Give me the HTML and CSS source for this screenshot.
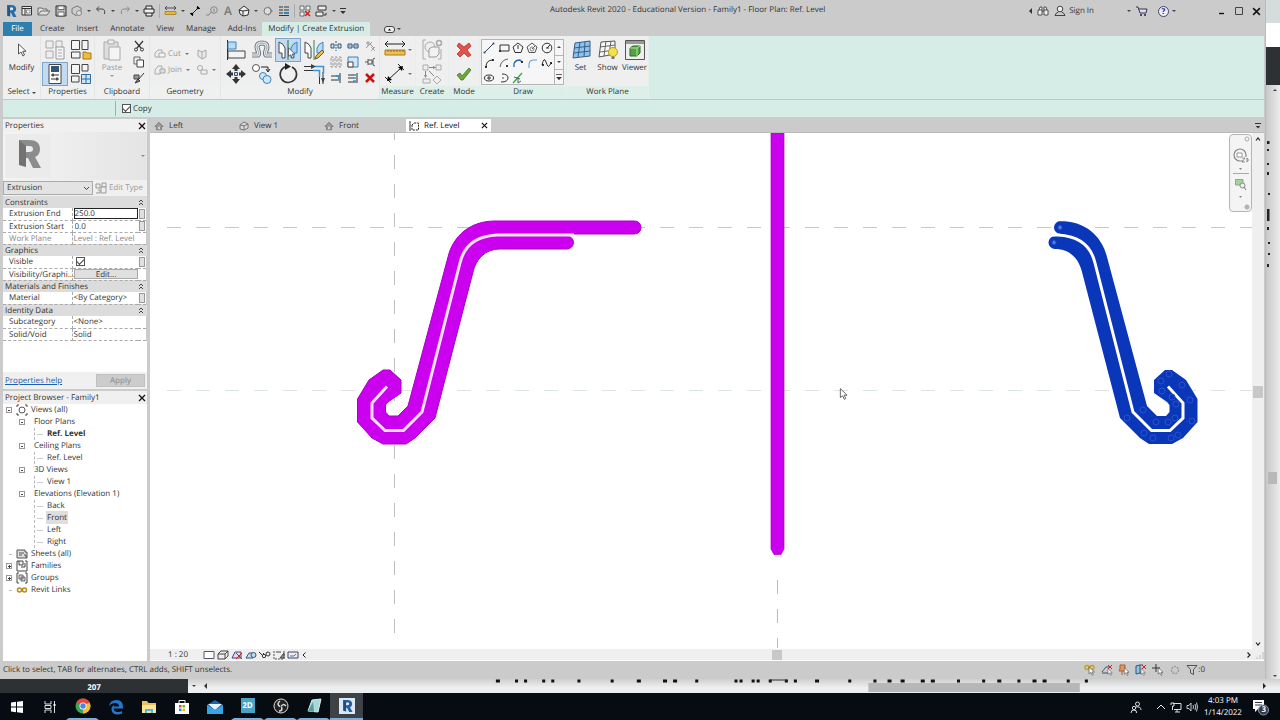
FILE: index.html
```html
<!doctype html>
<html lang="en-us">

<head>
    <title>Autodesk Revit 2020 - Family1</title>
    <meta charset="utf-8" />
    <meta name="viewport" content="width=device-width, initial-scale=1.0" />
    <link rel="stylesheet" href="styles.css">
</head>

<body>
    <!-- shared icons -->
    <svg class="defs" aria-hidden="true">
        <symbol id="house" viewBox="0 0 12 12"><path d="M1 6.500 6 1.500 11 6.500H9V10.500H3V6.500Z" fill="#999" stroke="#777"/><path d="M5 7h2v3H5z" fill="#ddd"/></symbol>
        <symbol id="cursor" viewBox="0 0 10 14"><path d="M1.500 1V11L4 9 6 13 7.500 12 5.700 8.300H9Z" fill="#fff" stroke="#444" stroke-width=".9"/></symbol>
        <symbol id="rlogo" viewBox="0 0 28 32"><path d="M5 2H15C22 2 26 5 26 11 26 15 24 18 21 19L27 30H19L14 20H12V29L5 27Z" fill="currentColor"/><path d="M12 8H15C18 8 19 9 19 11S18 14 15 14H12Z" fill="#e9eef2"/><path d="M5 2 12 8V29L5 27Z" fill="#000" opacity=".18"/></symbol>
        <symbol id="cross" viewBox="0 0 8 8"><path d="M1 1 7 7M7 1 1 7" stroke="currentColor" stroke-width="1.300"/></symbol>
        <symbol id="up2" viewBox="0 0 6 7"><path d="M1 3 3 1 5 3M1 6 3 4 5 6" fill="none" stroke="#333" stroke-width=".9"/></symbol>
    </svg>

    <div class="desktop">
        <div class="upper">
            <div class="window">
                <header class="titlebar">
                    <div class="quick">
                        <button class="q-r" aria-label="Revit"><svg width="12" height="14" viewBox="0 0 28 32"><use href="#rlogo"/></svg></button>
                        <button aria-label="Home"><svg width="12" height="12"><path d="M1 1.500H10.500V10H1ZM1 3.500H10M4 3V10" fill="#eee" stroke="#333"/><path d="M5.500 5H9V8H5.500Z" fill="#fff" stroke="#666" stroke-width=".7"/></svg></button>
                        <button aria-label="Open"><svg width="14" height="12"><path d="M1 10V3H5L6 4H10V6M1 10 4 6H13L10 10Z" fill="#ddd" stroke="#555" stroke-width=".8"/></svg></button>
                        <button aria-label="Save"><svg width="12" height="12"><path d="M1 1H11V11H1Z" fill="#bbb" stroke="#333"/><path d="M3 1H9V4.500H3ZM3 7H9V11H3Z" fill="#f5f5f5" stroke="#444" stroke-width=".7"/></svg></button>
                        <button aria-label="Synchronize"><svg width="12" height="12"><path d="M1 3.500 6 1 10 3V8L5 10.500 1 8Z" fill="#ccc" stroke="#777"/><circle cx="8" cy="8" r="2.500" fill="#ddd" stroke="#888"/></svg><i class="caret"></i></button>
                        <button aria-label="Undo"><svg width="12" height="12"><path d="M4 1.500 1.500 4 4 6.500M2 4H7Q10.500 4 9.500 9" fill="none" stroke="#444"/></svg><i class="caret"></i></button>
                        <button aria-label="Redo"><svg width="12" height="12"><path d="M8 1.500 10.500 4 8 6.500M10 4H5Q1.500 4 2.500 9" fill="none" stroke="#888"/></svg><i class="caret"></i></button>
                        <button aria-label="Print"><svg width="12" height="12"><path d="M3 4V1H9V4M1 4H11V8H1ZM3 8V11H9V8" fill="#eee" stroke="#222"/></svg></button>
                        <span class="sep"></span>
                        <button aria-label="Measure"><svg width="13" height="12"><path d="M1 3H12M3 1 1 3 3 5M10 1 12 3 10 5" fill="none" stroke="#333" stroke-width=".8"/><path d="M1 6.500H12V9.500H1Z" fill="#e9b63c" stroke="#9c7514" stroke-width=".7"/></svg><i class="caret"></i></button>
                        <button aria-label="Aligned Dimension"><svg width="12" height="12"><path d="M2 10 10 2M1 8 4 11M8 1 11 4" stroke="#222"/><circle cx="3" cy="9" r="1.300"/><circle cx="9" cy="3" r="1.300"/></svg></button>
                        <button aria-label="Tag"><svg width="13" height="12"><path d="M1 10H4L6 7" fill="none" stroke="#888"/><circle cx="9" cy="5" r="3.300" fill="none" stroke="#888"/><path d="M9 3.500V7" stroke="#888"/></svg></button>
                        <button class="q-a" aria-label="Text">A</button>
                        <button aria-label="Default 3D View"><svg width="12" height="12"><path d="M1 5 6 1 11 5 10 10 5 11 2 9Z" fill="#eee" stroke="#333"/><path d="M5 6V11M1 5 5 6 11 5" stroke="#333" fill="none"/></svg><i class="caret"></i></button>
                        <button aria-label="Section"><svg width="12" height="12"><path d="M6 1 11 6 6 11" fill="#888"/><circle cx="5.500" cy="6" r="3.500" fill="#ddd" stroke="#777"/></svg></button>
                        <button aria-label="Thin Lines"><svg width="12" height="12"><path d="M1 2H5M1 5H5M1 8H5M1 10.500H11M6 2H11M6 5H11" stroke="#333"/><path d="M6 8H11" stroke="#28c" stroke-width="2"/></svg></button>
                        <span class="sep"></span>
                        <button aria-label="Close Hidden Windows"><svg width="12" height="12"><path d="M1 1H5V5H1ZM7 1H11V5H7ZM1 7H5V11H1Z" fill="#eee" stroke="#555" stroke-width=".8"/><path d="M6 6 11 11M11 6 6 11" stroke="#c22" stroke-width="1.500"/></svg></button>
                        <button aria-label="Switch Windows"><svg width="13" height="12"><path d="M3 1H11V5H3ZM1 7H8V11H1Z" fill="#eee" stroke="#333"/><path d="M11 8V10H9" fill="none" stroke="#333"/></svg><i class="caret"></i></button>
                        <button aria-label="Customize"><i class="caret caret-bar"></i></button>
                    </div>
                    <h1>Autodesk Revit 2020 - Educational Version - Family1 - Floor Plan: Ref. Level</h1>
                    <div class="account">
                        <i class="caret caret-left"></i>
                        <button aria-label="Search"><svg width="12" height="12"><path d="M2 5 3 2H5V5M7 5V2H9L10 5M1 5H5V10H1ZM7 5H11V10H7ZM5 6H7" fill="#eee" stroke="#444" stroke-width=".9"/></svg></button>
                        <button class="signin"><svg width="12" height="12"><circle cx="6" cy="4" r="2.800" fill="#eee" stroke="#444"/><path d="M1 10.500Q1.500 8 4.500 7M11 10.500Q10.500 8 7.500 7M1 10.500H11" fill="none" stroke="#444"/></svg>Sign In</button>
                        <i class="caret caret-far"></i>
                        <button aria-label="App Store"><svg width="12" height="12"><path d="M0 2H2L4 8H10L11 4H3" fill="#dde" stroke="#335"/><circle cx="5" cy="10" r="1" fill="#224"/><circle cx="9" cy="10" r="1" fill="#224"/></svg></button>
                        <button class="helpbtn" aria-label="Help"><span class="help">?</span><i class="caret"></i></button>
                    </div>
                    <div class="winbtns">
                        <button aria-label="Minimize"><svg width="8" height="8"><path d="M1 6.500H6" stroke="#111" stroke-width="1.400"/></svg></button>
                        <button aria-label="Maximize"><svg width="10" height="8"><path d="M1.500.5H8.500V7.500H1.500Z" fill="none" stroke="#444"/></svg></button>
                        <button aria-label="Close"><svg width="9" height="9" viewBox="0 0 8 8"><use href="#cross"/></svg></button>
                    </div>
                </header>

                <nav class="tabs">
                    <a class="file" href="#">File</a>
                    <a href="#">Create</a>
                    <a href="#">Insert</a>
                    <a href="#">Annotate</a>
                    <a href="#">View</a>
                    <a href="#">Manage</a>
                    <a href="#">Add-Ins</a>
                    <a class="on" href="#">Modify | Create Extrusion</a>
                    <button aria-label="Minimize Ribbon"><svg width="11" height="7"><rect x=".5" y=".5" width="10" height="6" rx="2.500" fill="#eee" stroke="#444"/><path d="M4 4.500H7L5.500 2.500Z"/></svg><i class="caret"></i></button>
                </nav>

                <div class="ribbon">
                    <section class="panel p-select">
                        <div class="body">
                            <button class="big"><svg width="22" height="24" viewBox="0 0 22 24"><use href="#cursor" x="6" y="5" width="10" height="14"/></svg>Modify</button>
                        </div>
                        <h2>Select <i class="caret"></i></h2>
                    </section>
                    <section class="panel p-props">
                        <div class="body grid2">
                            <button aria-label="Type Properties"><svg width="22" height="22"><path d="M2 2H9V9H2ZM12 2H18V9H12ZM2 12H9V19H2Z" fill="#eee" stroke="#aaa"/><path d="M12 8H20V20H12Z" fill="#f6f6f6" stroke="#999"/><path d="M14 11H18M14 14H18M14 17H18" stroke="#aaa"/></svg></button>
                            <button aria-label="Family Category"><svg width="22" height="22"><path d="M1.500 1.500H9.500V10.500H1.500ZM12 1.500H18V10.500H12ZM1.500 13H10V19H1.500Z" fill="#f4f4f4" stroke="#444"/><path d="M13 13H16L17 14H21V20H13Z" fill="#eebb44" stroke="#a87c14"/></svg></button>
                            <button class="on" aria-label="Properties"><svg width="22" height="22"><path d="M5 1.500H17V20.500H5Z" fill="#fff" stroke="#444"/><path d="M7 3H15V9H7Z" fill="#357"/><path d="M7 12H15M7 16H15" stroke="#333"/><path d="M9 10.500V13.500M13 14.500V17.500" stroke="#333" stroke-width="1.500"/></svg></button>
                            <button aria-label="Family Types"><svg width="22" height="22"><path d="M1.500 1.500H9.500V10.500H1.500ZM12 1.500H18V8H12ZM1.500 13H9V19H1.500Z" fill="#f4f4f4" stroke="#444"/><path d="M11.500 11.500H20.500V20.500H11.500ZM11.500 16H20.500M16 11.500V20.500" fill="#cfe6f7" stroke="#2a6ca3"/></svg></button>
                        </div>
                        <h2>Properties</h2>
                    </section>
                    <section class="panel p-clip">
                        <div class="body">
                            <button class="big dim"><svg width="22" height="24"><path d="M3 4H17V21H3Z" fill="#ddd" stroke="#aaa"/><path d="M7 2H13V6H7Z" fill="#eee" stroke="#aaa"/><path d="M8 9H19V22H8Z" fill="#f4f4f4" stroke="#aaa"/></svg>Paste<i class="caret"></i></button>
                            <div class="smalls">
                                <button aria-label="Cut to Clipboard"><svg width="12" height="12"><path d="M2 1 8 8M10 1 4 8" stroke="#333" stroke-width="1.200"/><circle cx="3" cy="9.500" r="1.500" fill="none" stroke="#333"/><circle cx="9" cy="9.500" r="1.500" fill="none" stroke="#333"/></svg></button>
                                <button aria-label="Copy to Clipboard"><svg width="12" height="12"><path d="M1 1H7V8H1Z" fill="#eee" stroke="#666"/><path d="M4 4H10.500V11H4Z" fill="#fff" stroke="#444"/></svg></button>
                                <button aria-label="Match Type"><svg width="12" height="12"><path d="M1 3H6V7H1Z" fill="#999" stroke="#444"/><path d="M11 1 5 8M2 11 5 7 7 9Z" fill="#888" stroke="#333"/></svg></button>
                            </div>
                        </div>
                        <h2>Clipboard</h2>
                    </section>
                    <section class="panel p-geo">
                        <div class="body geo">
                            <button class="dim"><svg width="12" height="12"><path d="M1 5 4 2H8V6L6 9H1Z" fill="#eee" stroke="#aaa"/><path d="M5 5H11V9H5Z" fill="#f5f5f5" stroke="#aaa"/></svg>Cut<i class="caret"></i></button>
                            <button class="dim" aria-label="Cope"><svg width="12" height="12"><path d="M2 2 6 4 10 2V9L6 11 2 8ZM6 4V11" fill="#e8e8e8" stroke="#aaa"/></svg></button>
                            <button class="dim"><svg width="12" height="12"><path d="M1 6 4 2H8V6L6 10H1Z" fill="#eee" stroke="#aaa"/><path d="M6 5H11V9H6Z" fill="#ddd" stroke="#aaa"/></svg>Join<i class="caret"></i></button>
                            <button class="dim" aria-label="Wall Joins"><svg width="12" height="12"><circle cx="4" cy="4" r="2.500" fill="none" stroke="#aaa"/><path d="M5 6H11V10H5Z" fill="#eee" stroke="#aaa"/></svg><i class="caret"></i></button>
                        </div>
                        <h2>Geometry</h2>
                    </section>
                    <section class="panel p-modify">
                        <div class="body">
                            <div class="grid4">
                                <button aria-label="Align"><svg width="22" height="22"><path d="M2.500 1V21" stroke="#222"/><path d="M3 3H11V10H3Z" fill="#b9dcf5" stroke="#3a84bd"/><path d="M3 12H20V19H3Z" fill="#f4f4f4" stroke="#444"/></svg></button>
                                <button aria-label="Offset"><svg width="22" height="22"><path d="M1 16H7C9 14 6 11 6 8Q6 4 11 4T16 8C16 11 13 14 15 16H21" fill="none" stroke="#777" stroke-width="5"/><path d="M1 16H7C9 14 6 11 6 8Q6 4 11 4T16 8C16 11 13 14 15 16H21" fill="none" stroke="#eef1f4" stroke-width="3"/><path d="M1 16H7C9 14 6 11 6 8Q6 4 11 4T16 8C16 11 13 14 15 16H21" fill="none" stroke="#8aa0b4"/></svg></button>
                                <button class="on" aria-label="Mirror Pick Axis"><svg width="22" height="22"><path d="M2 3Q7 5 8 9V19H5V14H2Z" fill="#fff" stroke="#444"/><path d="M20 3Q15 5 14 9V19H17V14H20Z" fill="#9fd0f0" stroke="#3a84bd"/><path d="M11 1V21" stroke="#385" stroke-width="1.200"/><use href="#cursor" x="10" y="8" width="9" height="12"/></svg></button>
                                <button aria-label="Mirror Draw Axis"><svg width="22" height="22"><path d="M2 3Q7 5 8 9V19H5V14H2Z" fill="#fff" stroke="#444"/><path d="M20 3Q15 5 14 9V14H20Z" fill="#b9dcf5" stroke="#3a84bd"/><path d="M11 1V21" stroke="#385"/><path d="M12 20 13 17 19 11 21 13 15 19Z" fill="#eebb44" stroke="#654"/></svg></button>
                                <button aria-label="Move"><svg width="22" height="22"><path d="M11 1 15 6H12.500V8H9.500V6H7ZM11 21 7 16H9.500V14H12.500V16H15ZM1 11 6 7V9.500H8V12.500H6V15ZM21 11 16 15V12.500H14V9.500H16V7Z" fill="#333"/><path d="M9.500 9.500H12.500V12.500H9.500Z" fill="#cde" stroke="#357"/></svg></button>
                                <button aria-label="Copy"><svg width="22" height="22"><circle cx="5" cy="5" r="3.500" fill="#fff" stroke="#555"/><path d="M10 4H17V8M15 6 17 9 19 6" fill="none" stroke="#222"/><circle cx="12" cy="13" r="3.500" fill="#cfe6f7" stroke="#3a84bd"/><circle cx="16" cy="16.500" r="4" fill="#cfe6f7" stroke="#3a84bd"/></svg></button>
                                <button aria-label="Rotate"><svg width="22" height="22"><path d="M15 4A8.200 8.200 0 1 1 9 3.500" fill="none" stroke="#333" stroke-width="1.600"/><path d="M8 0 14 3.500 8 7Z" fill="#222"/></svg></button>
                                <button aria-label="Trim/Extend"><svg width="22" height="22"><path d="M1 3.500H12M1 7.500H10M20 9V21M16.500 12V21" stroke="#333"/><path d="M12 3.500H20.500V10M10 7.500H16.500V14" fill="none" stroke="#3a94d0" stroke-width="1.500"/><path d="M8 1 13 3.500 8 6ZM18 15 20 20 22 15Z" fill="#345"/></svg></button>
                            </div>
                            <div class="grid3">
                                <button aria-label="Split Element"><svg width="12" height="12"><path d="M1 4H4V8H1ZM8 4H11V8H8Z" fill="#cfe6f7" stroke="#357"/><path d="M6 1V11" stroke="#357" stroke-dasharray="2 1"/></svg></button>
                                <button aria-label="Split with Gap"><svg width="12" height="12"><path d="M1 4H5V8H1ZM7 4H11V8H7Z" fill="#cfe6f7" stroke="#357"/><path d="M0 6H12" stroke="#68a"/></svg></button>
                                <button aria-label="Unpin"><svg width="12" height="12"><path d="M2 3H6M4 1V6M6 4 10 8M2 8 8 2" stroke="#999"/><path d="M7 7 11 11M11 7 7 11" stroke="#aaa"/></svg></button>
                                <button aria-label="Array"><svg width="12" height="12"><path d="M1 1H3V11H1ZM5 1H7V11H5ZM9 1H11V11H9Z" fill="#eee" stroke="#999" stroke-dasharray="3 1"/></svg></button>
                                <button aria-label="Scale"><svg width="12" height="12"><path d="M1 1H11V11H1Z" fill="#cfe6f7" stroke="#3a84bd"/><path d="M1 6H6V11H1Z" fill="#fff" stroke="#444"/></svg></button>
                                <button aria-label="Pin"><svg width="12" height="12"><path d="M1 6H4M4 3V9M4 4H8V8H4M8 6H9M11 2 9 3V9L11 10" fill="none" stroke="#555"/></svg></button>
                                <button aria-label="Trim Single"><svg width="12" height="12"><path d="M10 1V11M1 4H6M1 8H9" stroke="#333"/><path d="M6 4H9V8" stroke="#3a94d0" fill="none" stroke-width="2"/></svg></button>
                                <button aria-label="Trim Multiple"><svg width="12" height="12"><path d="M10 1V11M1 3H7M1 6H7M1 10H9" stroke="#333"/><path d="M6 3H9M6 6H9M6 9H9" stroke="#3a94d0" stroke-width="1.500"/></svg></button>
                                <button aria-label="Delete"><svg width="12" height="12"><path d="M2 2 10 10M10 2 2 10" stroke="#c11" stroke-width="2.500"/></svg></button>
                            </div>
                        </div>
                        <h2>Modify</h2>
                    </section>
                    <section class="panel p-measure mint">
                        <div class="body stack">
                            <button aria-label="Measure"><svg width="22" height="22"><path d="M1 5H21M4 2 1 5 4 8M18 2 21 5 18 8" fill="none" stroke="#222"/><path d="M1 11H21V16H1Z" fill="#f0c050" stroke="#a87c14"/><path d="M4 11V13M7 11V13M10 11V13M13 11V13M16 11V13M19 11V13" stroke="#765"/></svg><i class="caret"></i></button>
                            <button aria-label="Dimension"><svg width="22" height="22"><path d="M4 17 18 4M1 14 7 20M14 1 20 7" stroke="#222"/><path d="M3 18 4 13 8 17ZM19 3 14 4 18 8Z"/></svg><i class="caret"></i></button>
                        </div>
                        <h2>Measure</h2>
                    </section>
                    <section class="panel p-create mint">
                        <div class="body stack">
                            <button aria-label="Create Group"><svg width="22" height="22"><path d="M5 1H2V20H5M17 20H20V10" fill="none" stroke="#aaa"/><circle cx="9" cy="8" r="5" fill="#eee" stroke="#aaa"/><path d="M8 10 11 8H18V15L15 18H8Z" fill="#f2f2f2" stroke="#999"/><circle cx="18" cy="4" r="2.500" fill="none" stroke="#aaa" stroke-width="1.500"/></svg></button>
                            <button aria-label="Create Similar"><svg width="22" height="22"><path d="M2 2H7V7H2ZM15 2H20V7H15ZM2 16H9V20H2ZM16 13 20 17 16 21 12 17Z" fill="#eee" stroke="#aaa"/><path d="M8 4.500H13M4.500 8V13M8 8 13 13" stroke="#888"/><path d="M12 3 15 4.500 12 6ZM3 12 4.500 15 6 12Z" fill="#888"/></svg></button>
                        </div>
                        <h2>Create</h2>
                    </section>
                    <section class="panel p-mode mint">
                        <div class="body stack">
                            <button aria-label="Cancel Edit Mode"><svg width="16" height="16"><path d="M3 1 8 5 13 1 15 4 11 8 15 13 12 15 8 11 4 15 1 12 5 8 1 4Z" fill="#e4504c" stroke="#b8332f" stroke-width=".8"/></svg></button>
                            <button aria-label="Finish Edit Mode"><svg width="16" height="16"><path d="M1 9 4 7 6 10 13 2 15 4 7 14H5Z" fill="#6aa838" stroke="#447722" stroke-width=".8"/></svg></button>
                        </div>
                        <h2>Mode</h2>
                    </section>
                    <section class="panel p-draw mint">
                        <div class="body">
                            <div class="gallery">
                                <div class="shapes">
                                    <button aria-label="Line"><svg width="12" height="12"><path d="M2 10 10 2" stroke="#345"/><circle cx="1.500" cy="10.500" r="1" fill="#346"/><circle cx="10.500" cy="1.500" r="1" fill="#346"/></svg></button>
                                    <button aria-label="Rectangle"><svg width="12" height="12"><path d="M2 3H11V9H2Z" fill="none" stroke="#333"/><path d="M1 8H3V10H1Z" fill="#333"/></svg></button>
                                    <button aria-label="Inscribed Polygon"><svg width="12" height="12"><path d="M6 1 11 5 9 10.500H3L1 5ZM6 3V7" fill="none" stroke="#333"/></svg></button>
                                    <button aria-label="Circumscribed Polygon"><svg width="12" height="12"><path d="M6 1 11 5 9 10.500H3L1 5ZM6 7 9 4" fill="none" stroke="#555"/><circle cx="6" cy="7" r="2" fill="none" stroke="#888"/></svg></button>
                                    <button aria-label="Circle"><svg width="12" height="12"><circle cx="6" cy="6" r="4.800" fill="none" stroke="#333"/><path d="M6 6 9 3M5 6H8" stroke="#333"/></svg></button>
                                    <button aria-label="Start-End-Radius Arc"><svg width="12" height="12"><path d="M3 10Q3 3 10 3" fill="none" stroke="#333"/><circle cx="3" cy="10" r="1"/><circle cx="10" cy="3" r="1"/></svg></button>
                                    <button aria-label="Center-ends Arc"><svg width="12" height="12"><path d="M2 10Q3 3 10 2" fill="none" stroke="#567"/><circle cx="9" cy="9" r="1"/></svg></button>
                                    <button aria-label="Tangent End Arc"><svg width="12" height="12"><path d="M2 10V7Q3 3 8 3L10 5" fill="none" stroke="#2a6cb3" stroke-width="1.300"/><circle cx="10" cy="5" r="1"/></svg></button>
                                    <button aria-label="Fillet Arc"><svg width="12" height="12"><path d="M3 11V7Q3 3 7 3H11" fill="none" stroke="#5a9cd3"/></svg></button>
                                    <button aria-label="Spline"><svg width="12" height="12"><path d="M1 8Q3-1 5 5T8 9 11 6" fill="none" stroke="#333"/><circle cx="2" cy="8" r="1"/><circle cx="10" cy="6" r="1"/></svg></button>
                                    <button aria-label="Ellipse"><svg width="12" height="12"><ellipse cx="6" cy="6" rx="4.500" ry="3" fill="none" stroke="#333"/><path d="M4 6H8M6 4V8" stroke="#333"/></svg></button>
                                    <button aria-label="Partial Ellipse"><svg width="12" height="12"><path d="M4 2Q10 2 10 6T3 10" fill="none" stroke="#333"/><path d="M4 6H6" stroke="#555"/></svg></button>
                                    <button aria-label="Pick Lines"><svg width="12" height="12"><path d="M1 11 10 1" stroke="#3a3" stroke-width="1.300"/><path d="M2 5 8 7M6 6V11L9 9" stroke="#466" fill="none"/></svg></button>
                                </div>
                                <div class="rollers">
                                    <button aria-label="Up"><i class="caret caret-up"></i></button>
                                    <button aria-label="Down"><i class="caret"></i></button>
                                    <button aria-label="More"><i class="caret caret-bar"></i></button>
                                </div>
                            </div>
                        </div>
                        <h2>Draw</h2>
                    </section>
                    <section class="panel p-plane mint">
                        <div class="body">
                            <button class="big"><svg width="22" height="24"><path d="M5 5 20 3V18L3 20Z" fill="#8fc3ee" stroke="#345f88"/><path d="M10 4 8 19M15 4 14 19M4 10 20 8M4 15 20 13" stroke="#345f88"/></svg>Set</button>
                            <button class="big"><svg width="22" height="24"><path d="M4 4 18 3V16L2 19Z" fill="#f8f8f8" stroke="#555"/><path d="M9 3 7 18M14 3 12 17M3 9 18 7M3 14 18 12" stroke="#666"/><circle cx="16" cy="14" r="4.500" fill="#f4e04a" stroke="#b8a020"/><path d="M14.500 18.500H17.500V21H14.500Z" fill="#777"/></svg>Show</button>
                            <button class="big"><svg width="22" height="24"><path d="M1.500 2.500H20.500V21.500H1.500Z" fill="#eee" stroke="#555"/><path d="M2 3H20V6H2Z" fill="#999"/><path d="M6 10 9 8H16V15L13 18H6Z" fill="#4fa343" stroke="#2d6d25"/><path d="M6 10H13V18M13 10 16 8" fill="none" stroke="#b9dfae"/></svg>Viewer</button>
                        </div>
                        <h2>Work Plane</h2>
                    </section>
                </div>

                <div class="options">
                    <label><input type="checkbox" checked> Copy</label>
                </div>

                <div class="workspace">
                    <aside class="dock">
                        <section class="props">
                            <div class="dock-head"><h3>Properties</h3><button aria-label="Close Properties"><svg width="8" height="8"><use href="#cross"/></svg></button></div>
                            <div class="typebox">
                                <div class="thumb"><svg width="28" height="32"><use href="#rlogo"/></svg></div>
                                <i class="caret"></i>
                            </div>
                            <div class="filter">
                                <div class="combo">
                                    <select aria-label="Filter"><option>Extrusion</option></select>
                                    <svg width="7" height="5"><path d="M1 1 3.500 3.500 6 1" fill="none" stroke="#444"/></svg>
                                </div>
                                <button class="dim"><svg width="12" height="12"><path d="M1 2H5V6H1ZM7 1H11V5H7ZM3 8H5V11H1" fill="none" stroke="#999"/><path d="M6 5H11V11H6Z" fill="#eee" stroke="#999"/></svg>Edit Type</button>
                            </div>
                            <table class="params">
                                <colgroup><col class="c-name"><col><col class="c-assoc"></colgroup>
                                <tbody>
                                    <tr class="group"><th colspan="3">Constraints<svg width="6" height="7"><use href="#up2"/></svg></th></tr>
                                    <tr><th>Extrusion End</th><td><input class="editing" type="text" value="250.0" aria-label="Extrusion End"></td><td class="assoc"><button aria-label="Associate Extrusion End"></button></td></tr>
                                    <tr><th>Extrusion Start</th><td><input type="text" value="0.0" aria-label="Extrusion Start"></td><td class="assoc"><button aria-label="Associate Extrusion Start"></button></td></tr>
                                    <tr class="readonly"><th>Work Plane</th><td>Level : Ref. Level</td><td class="assoc"></td></tr>
                                    <tr class="group"><th colspan="3">Graphics<svg width="6" height="7"><use href="#up2"/></svg></th></tr>
                                    <tr><th>Visible</th><td><input type="checkbox" checked aria-label="Visible"></td><td class="assoc"><button aria-label="Associate Visible"></button></td></tr>
                                    <tr><th>Visibility/Graphi...</th><td><button class="edit">Edit...</button></td><td class="assoc"></td></tr>
                                    <tr class="group"><th colspan="3">Materials and Finishes<svg width="6" height="7"><use href="#up2"/></svg></th></tr>
                                    <tr><th>Material</th><td>&lt;By Category&gt;</td><td class="assoc"><button aria-label="Associate Material"></button></td></tr>
                                    <tr class="group"><th colspan="3">Identity Data<svg width="6" height="7"><use href="#up2"/></svg></th></tr>
                                    <tr><th>Subcategory</th><td>&lt;None&gt;</td><td class="assoc"></td></tr>
                                    <tr><th>Solid/Void</th><td>Solid</td><td class="assoc"></td></tr>
                                </tbody>
                            </table>
                            <div class="props-foot">
                                <a href="#">Properties help</a>
                                <button disabled>Apply</button>
                            </div>
                        </section>

                        <section class="browser">
                            <div class="dock-head"><h3>Project Browser - Family1</h3><button aria-label="Close Project Browser"><svg width="8" height="8"><use href="#cross"/></svg></button></div>
                            <ul class="tree">
                                <li>
                                    <div class="row"><i class="toggle"></i><svg width="12" height="12"><path d="M3 1H1V3M9 1H11V3M1 9V11H3M11 9V11H9" fill="none" stroke="#444"/><circle cx="6" cy="6" r="3" fill="none" stroke="#555"/></svg>Views (all)</div>
                                    <ul>
                                        <li><div class="row"><i class="toggle"></i>Floor Plans</div>
                                            <ul><li><b>Ref. Level</b></li></ul></li>
                                        <li><div class="row"><i class="toggle"></i>Ceiling Plans</div>
                                            <ul><li>Ref. Level</li></ul></li>
                                        <li><div class="row"><i class="toggle"></i>3D Views</div>
                                            <ul><li>View 1</li></ul></li>
                                        <li><div class="row"><i class="toggle"></i>Elevations (Elevation 1)</div>
                                            <ul>
                                                <li>Back</li>
                                                <li><span class="picked">Front</span></li>
                                                <li>Left</li>
                                                <li>Right</li>
                                            </ul></li>
                                    </ul>
                                </li>
                                <li><div class="row"><i class="toggle none"></i><svg width="12" height="12"><path d="M1 2H9V4H11V10H1ZM3 5H8M3 7H6M8 7H10V10" fill="#ddd" stroke="#555"/></svg>Sheets (all)</div></li>
                                <li><div class="row"><i class="toggle plus"></i><svg width="12" height="12"><path d="M3 1H1V11H3M9 1H11V11H3" fill="none" stroke="#444"/><path d="M3 1H7V5H3ZM5 7H9V3" fill="#f4f4f4" stroke="#444"/></svg>Families</div></li>
                                <li><div class="row"><i class="toggle plus"></i><svg width="12" height="12"><path d="M3 1H1V11H3M9 1H11V11H9" fill="none" stroke="#444"/><path d="M3 3H7V7H3ZM5 5H9V9H5Z" fill="#ddd" stroke="#666"/></svg>Groups</div></li>
                                <li><div class="row"><i class="toggle none"></i><svg width="12" height="12"><circle cx="3.500" cy="6" r="2" fill="none" stroke="#b98a18" stroke-width="1.500"/><circle cx="8.500" cy="6" r="2" fill="none" stroke="#b98a18" stroke-width="1.500"/></svg>Revit Links</div></li>
                            </ul>
                        </section>
                    </aside>

                    <main class="view">
                        <div class="viewtabs">
                            <a href="#"><svg width="10" height="10"><use href="#house"/></svg>Left</a>
                            <a href="#"><svg width="10" height="10"><path d="M1 4 5 1 9 3V7L5 9 1 8ZM1 4 5 5 9 3M5 5V9" fill="#ddd" stroke="#777"/></svg>View 1</a>
                            <a href="#"><svg width="10" height="10"><use href="#house"/></svg>Front</a>
                            <a class="on" href="#"><svg width="10" height="10"><path d="M1 0V10" stroke="#333"/><path d="M3 4 5 2H9.500V9H3Z" fill="none" stroke="#222" stroke-dasharray="2 1"/></svg>Ref. Level<svg class="x" width="7" height="7"><use href="#cross"/></svg></a>
                            <button class="tablist" aria-label="Tab list"><i class="caret caret-bar"></i></button>
                        </div>

                        <div class="canvasrow">
                            <div class="canvas">
                                <svg class="drawing" viewBox="150 133 1102 515" preserveAspectRatio="xMidYMin meet">
                                    <!-- reference planes -->
                                    <g fill="none" stroke="#c4cac4" stroke-dasharray="14 15">
                                        <path d="M167 227.500H1252"/>
                                        <path d="M167 390.500H1252" stroke="#dbe6dc"/>
                                        <path d="M394.500 126V648" stroke="#c0c0c0"/>
                                        <path d="M777.500 580V652" stroke="#a9c9a9"/>
                                    </g>
                                    <!-- source profile -->
                                    <path class="profile" d="M634.500 221a6.500 6.500 0 0 1 0 13H567V236a6.500 6.500 0 0 1 0 13H500C485 249 476 259 473 272L435 418 415 438 406 444H383L372 438 357.500 422V399L369 380 383 370H390L401 380V393L388 402 385.500 405V412L389 416H398L408 406 448 257C453 236 470 221 495 221Z"/>
                                    <path class="seam" d="M574 235H497C476 236 464 246 460 263L422 412 403.500 430.500H385L372 418V403L387 386.500"/>
                                    <!-- mirror axis -->
                                    <path d="M771 133H784V549L781 554.500H774L771 549Z" fill="#cb00ee" stroke="#a800c8" stroke-width=".7"/>
                                    <!-- mirrored copy -->
                                    <g transform="translate(1555 0) scale(-1 1)">
                                        <path class="copy" d="M494.500 221a6.500 6.500 0 0 1 0 13L500 236a6.500 6.500 0 0 1 0 13C485 249 476 259 473 272L435 418 415 438 406 444H383L372 438 357.500 422V399L369 380 383 370H390L401 380V393L388 402 385.500 405V412L389 416H398L408 406 448 257C453 236 470 221 495 221Z"/>
                                        <path class="seam white" d="M508 235H497C476 236 464 246 460 263L422 412 403.500 430.500H385L372 418V403L387 386.500"/>
                                    </g>
                                    <g class="nodes">
                                        <circle cx="1127" cy="418" r="3"/><circle cx="1144" cy="433" r="3"/><circle cx="1153" cy="438" r="3"/><circle cx="1171" cy="438" r="3"/><circle cx="1178" cy="435" r="3"/><circle cx="1192" cy="421" r="3"/><circle cx="1190" cy="400" r="3"/><circle cx="1182" cy="385" r="3"/><circle cx="1169" cy="374" r="3"/><circle cx="1161" cy="381" r="3"/><circle cx="1162" cy="391" r="3"/><circle cx="1172" cy="397" r="3"/><circle cx="1176" cy="404" r="3"/><circle cx="1175" cy="418" r="3"/><circle cx="1168" cy="422" r="3"/><circle cx="1156" cy="422" r="3"/><circle cx="1143" cy="410" r="3"/>
                                        <circle class="end" cx="1060" cy="227.500" r="2"/><circle class="end" cx="1054" cy="242.500" r="2"/>
                                    </g>
                                    <use href="#cursor" x="839" y="387" width="9" height="14"/>
                                </svg>
                                <div class="navbar">
                                    <svg width="21" height="76"><circle cx="17" cy="4" r="2" fill="none" stroke="#aaa"/><path d="M13 26H10A6 6 0 1 1 16 20V22" fill="none" stroke="#888" stroke-width="1.200"/><path d="M7 22V18H12V22Z" fill="#fff" stroke="#999"/><path d="M12 23H15L12 27H15M17 23V27Q20 25 17 23" fill="none" stroke="#777" stroke-width=".8"/><path d="M9 33H12L10.500 35Z" fill="#888"/><path d="M3 38.500H19" stroke="#aaa"/><path d="M5.500 44.500H13V50H5.500Z" fill="#a8d09c" stroke="#87ad7e"/><circle cx="12.500" cy="50.500" r="2.500" fill="#eee" stroke="#888"/><path d="M14 52 16 55" stroke="#777"/><path d="M9 61H12L10.500 63Z" fill="#888"/><circle cx="17" cy="72" r="2" fill="none" stroke="#999"/><path d="M16 72H18" stroke="#777"/></svg>
                                </div>
                            </div>
                            <div class="vscroll">
                                <svg width="8" height="6"><path d="M2 4.500 4 2 6 4.500" fill="none" stroke="#222" stroke-width="1.200"/></svg>
                                <i class="grip"></i>
                                <svg width="8" height="6"><path d="M2 1.500 4 4 6 1.500" fill="none" stroke="#222" stroke-width="1.200"/></svg>
                            </div>
                        </div>

                        <div class="viewbar">
                            <button class="scale">1 : 20</button>
                            <button aria-label="Detail Level"><svg width="12" height="10"><path d="M1 1.500H11V8.500H1Z" fill="#fff" stroke="#557"/></svg></button>
                            <button aria-label="Visual Style"><svg width="12" height="10"><path d="M1 4 4 1H11V6L8 9H1ZM1 4H8V9M8 4 11 1" fill="#eee" stroke="#444"/></svg></button>
                            <button aria-label="Sun Path"><svg width="12" height="10"><path d="M1 8 4 2H10V8Z" fill="#dde" stroke="#447"/><path d="M5 3 11 9M11 3 5 9" stroke="#c22"/></svg></button>
                            <button aria-label="Crop View"><svg width="12" height="10"><path d="M1 8 4 3H8V8Z" fill="#cde" stroke="#357"/><circle cx="8.500" cy="5" r="2.500" fill="#bde" stroke="#357"/></svg></button>
                            <button aria-label="Temporary Hide"><svg width="12" height="10"><path d="M0 2 4 6M4 3 6 5" stroke="#333"/><circle cx="5" cy="6" r="1.700" fill="none" stroke="#333"/><circle cx="9" cy="4" r="2" fill="none" stroke="#333"/></svg></button>
                            <button aria-label="Reveal Hidden"><svg width="12" height="10"><path d="M1 1V9H11V1" fill="none" stroke="#555" stroke-dasharray="2 1"/><path d="M3 2H8M7 8 11 3V8Z" fill="#999" stroke="#444"/></svg></button>
                            <button aria-label="Reveal Constraints"><svg width="12" height="10"><path d="M1 2H11V8H1Z" fill="#eee" stroke="#446"/><path d="M3 6H7L9 4" fill="none" stroke="#47a"/></svg></button>
                            <svg width="6" height="8"><path d="M4.500 1.500 2 4 4.500 6.500" fill="none" stroke="#222"/></svg>
                            <div class="htrack"><i class="grip"></i></div>
                            <svg width="6" height="8"><path d="M1.500 1.500 4 4 1.500 6.500" fill="none" stroke="#222" stroke-width="1.200"/></svg>
                            <svg width="10" height="10"><path d="M3 9V7M6 9V5M9 9V2" stroke="#bbb"/></svg>
                        </div>
                    </main>
                </div>

                <footer class="status">
                    <span>Click to select, TAB for alternates, CTRL adds, SHIFT unselects.</span>
                    <div class="toggles">
                        <button aria-label="Select Links"><svg width="12" height="12"><circle cx="3" cy="3.500" r="2" fill="none" stroke="#c9a21c" stroke-width="1.500"/><circle cx="8" cy="3.500" r="2" fill="none" stroke="#c9a21c" stroke-width="1.500"/><use href="#cursor" x="4" y="2" width="7" height="10"/></svg></button>
                        <button aria-label="Select Underlay"><svg width="12" height="12"><path d="M1 8 5 3H8M1 9H7" fill="#cde" stroke="#357"/><path d="M7 1 11 5M11 1 7 5" stroke="#c22"/><use href="#cursor" x="6" y="4" width="6" height="8"/></svg></button>
                        <button aria-label="Select Pinned"><svg width="12" height="12"><path d="M2 1H7V5L9 7H1L2 5ZM4 7V11" fill="#e9955a" stroke="#a5602e"/><use href="#cursor" x="5" y="3" width="7" height="9"/></svg></button>
                        <button aria-label="Select by Face"><svg width="12" height="12"><path d="M1 2 5 1V9L1 10ZM5 1H8M5 9H7" fill="#8cc4ee" stroke="#357"/><path d="M7 1 11 5M11 1 7 5" stroke="#c22"/><use href="#cursor" x="5" y="4" width="6" height="8"/></svg></button>
                        <button aria-label="Drag on Selection"><svg width="12" height="12"><path d="M4 0V8M0 4H8" stroke="#333"/><use href="#cursor" x="5" y="3" width="7" height="9"/></svg></button>
                        <button aria-label="Background Processes"><svg width="12" height="12"><circle cx="6" cy="6" r="3.500" fill="none" stroke="#999" stroke-width="1.500" stroke-dasharray="2 1"/></svg></button>
                        <button class="selcount"><svg width="12" height="12"><path d="M1 1.500H11L7.500 5.500V10.500L4.500 9V5.500Z" fill="#ccc" stroke="#555"/></svg>:0</button>
                    </div>
                </footer>
            </div>

            <!-- sliver of the window that sits behind -->
            <div class="behind-side">
                <div class="b-top"></div><div class="b-white"></div><div class="b-dark"></div>
                <div class="b-track">
                    <i class="caret caret-up"></i>
                    <svg width="3" height="190"><path d="M0 50H2.500V53H0ZM0 58H2V60H0ZM0 72H2V74H0ZM0 81H2V84H0ZM1 102H3V104H1ZM0 118H2.500V130H0ZM0 136H2V139H0ZM1 151H3V153H1ZM1 162H3V164H1ZM0 173H2V176H0Z" fill="#222"/></svg>
                    <i class="grip"></i>
                    <i class="caret"></i>
                </div>
            </div>
        </div>

        <div class="behind-bottom">
            <div class="cell">207</div>
            <div class="sheetbar">
                <i class="caret"></i><i class="caret caret-left"></i>
                <svg viewBox="219 0 1033 14" preserveAspectRatio="none"><path d="M868 4H1078V13H868Z" fill="#b5b7b9"/><path d="M498 2H502M517 2H520M526 2H529M544 2H547M553 2H556M579 2H582M612 2H615M638 2H642M664 2H668M674 2H678M696 2H699M735 2H738M740 2H743M752 2H755M757 2H760M769 2H772M785 2H788M794 2H797M815 2H819M848 2H851M873 2H876M887 2H891M900 2H904M920 2H924M930 2H934M956 2H959M981 2H984M996 2H1000M1016 2H1019M1031 2H1035M1041 2H1045M1065 2H1068M1083 2H1086" stroke="#111" stroke-width="3"/><path d="M770 1H787" stroke="#333"/></svg>
                <i class="caret caret-right"></i>
            </div>
        </div>

        <nav class="taskbar">
            <button aria-label="Start"><svg width="14" height="14"><path d="M1 2.500 6 1.800V6.500H1ZM7 1.700 13 1V6.500H7ZM1 7.500H6V12.200L1 11.500ZM7 7.500H13V13L7 12.300Z" fill="#fff"/></svg></button>
            <button aria-label="Task View"><svg width="14" height="14"><path d="M2 1V4H8V1M2 13V10H8V13M2 5.500H8V8.500H2ZM11.500 1V13" fill="none" stroke="#ddd"/><path d="M10.500 4H12.500V6H10.500Z" fill="#fff"/></svg></button>
            <button class="run" aria-label="Chrome"><svg width="16" height="16"><circle cx="8" cy="8" r="7.500" fill="#3aa757"/><path d="M8 8 1.500 4.300A7.500 7.500 0 0 1 14.500 4.300Z" fill="#e8453c"/><path d="M8 8 14.500 4.300A7.500 7.500 0 0 1 8 15.500Z" fill="#f9bb2d"/><path d="M8 4.500H14.700" stroke="#e8453c" stroke-width="1.500"/><circle cx="8" cy="8" r="3.500" fill="#fff"/><circle cx="8" cy="8" r="2.700" fill="#4285f4"/></svg></button>
            <button aria-label="Edge"><svg width="16" height="16"><path d="M1 7Q2 1 8.500 1T15 8V9.500H5.500Q6 13 10 13 12.500 13 14 12V14.500Q12 15.500 9 15.500 3.500 15 3.500 10 3.500 7 7 5.500 5.500 6.500 5.500 7.500H11Q11 4 7.500 4 3.500 4 1 7Z" fill="#2476cf"/></svg></button>
            <button aria-label="File Explorer"><svg width="16" height="14"><path d="M1 1H6L7.500 3H15V13H1Z" fill="#e8c25a"/><path d="M1 5H15V13H1Z" fill="#f8e49a"/><path d="M4 9H12V13H10V11H6V13H4Z" fill="#58b4dd"/></svg></button>
            <button aria-label="Microsoft Store"><svg width="16" height="16"><path d="M5 4V1.500H11V4" fill="none" stroke="#fff"/><path d="M1 4H15V15H1Z" fill="#fff"/><path d="M5 6H7.500V8.500H5Z" fill="#e24a2c"/><path d="M8.500 6H11V8.500H8.500Z" fill="#7cb518"/><path d="M5 9.500H7.500V12H5Z" fill="#1f8fe0"/><path d="M8.500 9.500H11V12H8.500Z" fill="#f5b81c"/></svg></button>
            <button aria-label="Mail"><svg width="18" height="16"><path d="M1 6 9 1 17 6V15H1Z" fill="#1766b0"/><path d="M2 5H16L9 11Z" fill="#e8f4fc"/><path d="M1 6 9 11 17 6V15H1Z" fill="#35a5e5"/></svg></button>
            <button class="run" aria-label="2D Viewer"><span class="app2d">2D</span></button>
            <button class="run" aria-label="OBS"><svg width="16" height="16"><circle cx="8" cy="8" r="7" fill="#222" stroke="#ddd"/><path d="M7 3Q3 6 7 8.500M13 8Q10 5 8 8.500M6 13Q10 13 8.500 9" fill="none" stroke="#ddd" stroke-width="1.500"/></svg></button>
            <button class="run" aria-label="Notepad"><svg width="16" height="16"><path d="M6 2 15 1 12 14 2 13Z" fill="#a8d8d8" stroke="#d8eeee"/><path d="M2 13 7 4 8 14Z" fill="#5a9a9c"/></svg></button>
            <button class="run current" aria-label="Revit"><span class="appr"><svg width="12" height="14"><use href="#rlogo"/></svg></span></button>
            <div class="tray">
                <svg width="12" height="12"><circle cx="7.500" cy="3" r="2" fill="none" stroke="#ddd"/><circle cx="4" cy="7" r="1.700" fill="none" stroke="#ddd"/><path d="M1 12Q1 9 4 9T6.500 12M5.500 6Q11 5 11 9" fill="none" stroke="#ddd"/></svg>
                <svg class="gap" width="10" height="8"><path d="M1 6 5 2 9 6" fill="none" stroke="#eee"/></svg>
                <svg width="12" height="12"><path d="M3 2.500H11V8.500H4M7 9V11M5 11H10M1 4V2H4V5H2.500V9" fill="none" stroke="#ddd"/></svg>
                <svg width="12" height="12"><path d="M1 4.500H3L5 2V10L3 7.500H1ZM7 4Q8 6 7 8M9 3Q10.500 6 9 9M10.500 1.500Q12.500 6 10.500 10.500" fill="none" stroke="#ddd" stroke-width=".9"/></svg>
                <div class="clock"><time>4:03 PM</time><time>1/14/2022</time></div>
                <button class="note" aria-label="Notifications"><svg width="18" height="18"><path d="M2 2H13V11H7L4 14V11H2Z" fill="#fff"/><path d="M4 4.500H11M4 7H11" stroke="#333"/><circle cx="12.500" cy="12" r="5" fill="#333c44" stroke="#99a"/></svg><span>3</span></button>
            </div>
        </nav>
    </div>
</body>

</html>
```
FILE: styles.css
```css
* {
    box-sizing: border-box;
}

body {
    margin: 0;
    font-family: "Open Sans", "Noto Sans", sans-serif;
    font-size: 8px;
    line-height: 12px;
    color: #333;
    background-color: #cbcbcb;
    text-rendering: geometricPrecision;
}

h1, h2, h3, ul {
    margin: 0;
    padding: 0;
    font-size: 8px;
    font-weight: normal;
}

ul {
    list-style: none;
}

a {
    color: inherit;
    text-decoration: none;
}

button {
    display: flex;
    align-items: center;
    justify-content: center;
    padding: 0;
    border: none;
    background: none;
    font: inherit;
    color: inherit;
    text-rendering: inherit;
}

svg {
    flex: none;
    display: block;
}

.defs {
    position: absolute;
    width: 0;
    height: 0;
}

.caret {
    flex: none;
    display: inline-block;
    border: 2px solid transparent;
    border-top-color: #444;
    border-bottom: 0;
}

.caret-up {
    border-top: 0;
    border-bottom: 2px solid #444;
}

.caret-left {
    border: 3px solid transparent;
    border-right-color: #333;
    border-left: 0;
}

.caret-right {
    border: 3px solid transparent;
    border-left-color: #222;
    border-right: 0;
}

.caret-bar {
    width: 6px;
    height: 6px;
    border: 0;
    border-top: 1px solid #333;
    background-color: #333;
    background-clip: content-box;
    padding-top: 2px;
    clip-path: polygon(0 0, 100% 0, 100% 45%, 50% 100%, 0 45%);
}

.dim {
    color: #999;
}

.desktop {
    display: flex;
    flex-direction: column;
    min-height: 100vh;
}

.upper {
    flex: 1;
    display: flex;
}

.window {
    flex: 1;
    min-width: 0;
    display: flex;
    flex-direction: column;
    background-color: #cbcbcb;
    border-right: 1px solid #bbb;
}

/* title bar */
.titlebar {
    display: flex;
    align-items: center;
    height: 22px;
    padding: 0 4px 0 5px;
}

.titlebar h1 {
    flex: 1;
    text-align: center;
    line-height: 20px;
    height: 22px;
}

.quick {
    display: flex;
    align-items: center;
    gap: 4px;
}

.quick button {
    gap: 4px;
}

.q-r {
    color: #2a6ca8;
}

.quick .q-a {
    font-size: 12px;
    font-weight: 600;
    color: #777;
    width: 12px;
}

.sep {
    width: 1px;
    height: 14px;
    background-color: #aaa;
}

.account {
    display: flex;
    align-items: center;
    gap: 5px;
    padding-right: 42px;
}

.account button {
    gap: 3px;
}

.caret-far {
    margin-left: 28px;
}

.account .helpbtn {
    margin-left: 5px;
}

.help {
    width: 11px;
    height: 11px;
    border: 1px solid #446;
    border-radius: 50%;
    background-color: #eef;
    line-height: 9px;
    font-weight: bold;
    color: #228;
}

.winbtns {
    display: flex;
    gap: 8px;
    color: #111;
}

/* ribbon tabs */
.tabs {
    display: flex;
    align-items: stretch;
    height: 14px;
    padding-left: 3px;
    line-height: 14px;
}

.tabs a {
    padding: 0 6px;
}

.tabs .file {
    width: 29px;
    margin-right: 2px;
    text-align: center;
    color: #fff;
    background-color: #2f7eb0;
}

.tabs .on {
    padding: 0 6px;
    background-color: #d5ede6;
}

.tabs button {
    gap: 2px;
    margin-left: 14px;
}

/* ribbon */
.ribbon {
    display: flex;
    height: 64px;
    margin: 0 1px 0 3px;
    background-color: #d5ede6;
    border-bottom: 1px solid #b9cbc6;
}

.panel {
    display: flex;
    flex-direction: column;
    border-right: 1px solid #e4e6e6;
    background-color: #eff1f1;
}

.panel.mint {
    background-color: #dcefe9;
    border-right-color: #e4eeeb;
}

.panel .body {
    flex: 1;
    display: flex;
    padding-top: 2px;
    background-color: #efefef;
}

.panel h2 {
    height: 13px;
    line-height: 11px;
    text-align: center;
}

.p-select { width: 38px; }
.p-props { width: 54px; }
.p-clip { width: 55px; }
.p-geo { width: 71px; }
.p-modify { width: 159px; }
.p-measure { width: 36px; }
.p-create { width: 33px; }
.p-mode { width: 31px; }
.p-draw { width: 87px; }
.p-plane { width: 82px; }

.big {
    flex: 1;
    flex-direction: column;
    justify-content: flex-start;
}

.big .caret {
    margin-top: 1px;
    border-top-color: #999;
}

.panel .on {
    background-color: #c3daf0;
    outline: 1px solid #7ea5cc;
    outline-offset: -1px;
}

.grid2 {
    flex-wrap: wrap;
    justify-content: center;
    align-content: flex-start;
}

.grid2 button {
    width: 26px;
    height: 24px;
}

.smalls {
    display: grid;
    grid-template-rows: repeat(3, 16px);
    width: 20px;
}

.panel .geo {
    flex-wrap: wrap;
    align-content: flex-start;
    padding: 10px 0 0 4px;
}

.geo button {
    height: 16px;
    gap: 2px;
    justify-content: flex-start;
    width: 24px;
}

.geo button:nth-child(odd) {
    width: 42px;
}

.geo .caret,
.stack .caret {
    margin-left: 2px;
    border-top-color: #777;
}

.grid4 {
    display: grid;
    grid-template-columns: repeat(4, 26px);
    grid-auto-rows: 24px;
    margin-left: 2px;
}

.grid3 {
    display: grid;
    grid-template-columns: repeat(3, 17px);
    grid-auto-rows: 16px;
}

.panel .stack {
    flex-direction: column;
}

.stack button {
    height: 24px;
}

.gallery {
    flex: 1;
    display: flex;
    height: 46px;
    margin: 1px 2px 0 1px;
    border: 1px solid #b5b5b5;
    background-color: #f6f6f6;
}

.shapes {
    flex: 1;
    display: grid;
    grid-template-columns: repeat(5, 1fr);
    grid-auto-rows: 15px;
}

.rollers {
    width: 9px;
    display: grid;
    grid-template-rows: repeat(3, 1fr);
    border-left: 1px solid #b5b5b5;
}

.rollers button + button {
    border-top: 1px solid #b5b5b5;
}

/* options bar */
.options {
    display: flex;
    align-items: center;
    height: 17px;
    margin: 0 1px 0 3px;
    padding-left: 112px;
    background-color: #d5ede6;
}

.options label {
    display: flex;
    align-items: center;
    gap: 2px;
    padding-left: 6px;
    height: 15px;
    border-left: 1px solid #9fb1ac;
}

input[type="checkbox"] {
    appearance: none;
    display: flex;
    align-items: center;
    justify-content: center;
    width: 9px;
    height: 9px;
    margin: 0;
    border: 1px solid #555;
    background-color: #fff;
}

input[type="checkbox"]:checked::before {
    content: "";
    width: 6px;
    height: 3px;
    margin-bottom: 2px;
    border: solid #444;
    border-width: 0 0 1px 1px;
    transform: rotate(-45deg);
}

/* docked palettes */
.workspace {
    flex: 1;
    display: flex;
}

.dock {
    width: 150px;
    padding: 2px 3px 0 3px;
    display: flex;
    flex-direction: column;
    gap: 2px;
}

.props,
.browser {
    background-color: #fff;
}

.props {
    display: flex;
    flex-direction: column;
    height: 270px;
}

.browser {
    flex: 1;
}

.dock-head {
    display: flex;
    align-items: center;
    justify-content: space-between;
    height: 13px;
    padding: 0 1px 0 2px;
    background-color: #f0f0f0;
}

.dock-head button {
    color: #111;
}

.typebox {
    display: flex;
    align-items: center;
    justify-content: space-between;
    height: 48px;
    padding: 0 2px;
    background: linear-gradient(to right, #f4f4f4, #e4e4e4);
}

.typebox .caret {
    border-top-color: #888;
}

.thumb {
    display: flex;
    align-items: center;
    justify-content: center;
    width: 46px;
    height: 44px;
    padding-bottom: 4px;
    background-color: #ebebeb;
    color: #8c8c8c;
}

.filter {
    display: flex;
    justify-content: space-between;
    height: 16px;
    padding: 1px 4px 1px 0;
    background-color: #f0f0f0;
}

.combo {
    position: relative;
}

.combo svg {
    position: absolute;
    right: 3px;
    top: 5px;
}

.combo select {
    appearance: none;
    display: block;
    width: 90px;
    height: 14px;
    padding: 0 3px;
    border: 1px solid #aaa;
    border-radius: 0;
    color: inherit;
    font: inherit;
    text-rendering: inherit;
    background-color: #e3e3e3;
}

.filter button {
    gap: 2px;
}

.params {
    width: 100%;
    table-layout: fixed;
    border-collapse: collapse;
}

.c-name {
    width: 69px;
}

.c-assoc {
    width: 8px;
}

.params th,
.params td {
    height: 12px;
    padding: 0;
    line-height: 11px;
    font-weight: normal;
    text-align: left;
    white-space: nowrap;
    border-bottom: 1px dashed #aaa;
}

.params th {
    padding-left: 6px;
    border-right: 1px dashed #aaa;
}

.params td {
    padding-left: 1px;
}

.params .group th {
    padding-left: 2px;
    border: 0;
    background-color: #dcdcdc;
}

.group svg {
    float: right;
    margin: 2px 3px 0 0;
}

.params .assoc {
    border-right: 1px solid #ccc;
}

.assoc button {
    width: 6px;
    height: 10px;
    border: 1px solid #999;
    background-color: #e0e0e0;
}

.params input[type="text"] {
    display: block;
    width: 100%;
    height: 11px;
    padding: 0 1px;
    border: 0;
    background: none;
    font: inherit;
    color: inherit;
    text-rendering: inherit;
}

.params .editing {
    outline: 1px solid #222;
    outline-offset: -1px;
}

.params input[type="checkbox"] {
    margin-left: 2px;
}

.params .edit {
    width: 100%;
    height: 10px;
    border: 1px solid #aaa;
    background-color: #e0e0e0;
}

.readonly {
    color: #888;
}

.props-foot {
    display: flex;
    align-items: center;
    justify-content: space-between;
    height: 17px;
    margin-top: auto;
    padding: 0 2px;
    background-color: #f0f0f0;
}

.props-foot a {
    color: #1a5fb0;
    text-decoration: underline;
}

.props-foot button {
    width: 49px;
    height: 13px;
    color: #888;
    background-color: #ccc;
    border: 1px solid #c0c0c0;
}

/* project browser tree */
.tree {
    padding-left: 3px;
}

.tree .row {
    display: flex;
    align-items: center;
    height: 12px;
    gap: 3px;
}

.tree .row svg {
    margin-left: 1px;
}

.toggle {
    width: 6px;
    height: 6px;
    border: 1px solid #999;
    background: linear-gradient(#444, #444) no-repeat center / 2px 1px #fff;
}

.toggle.plus {
    background: linear-gradient(#444, #444) no-repeat center / 3px 1px, linear-gradient(#444, #444) no-repeat center / 1px 3px;
}

.toggle.none {
    border: 0;
    background: linear-gradient(to right, #bbb, #bbb) no-repeat right center / 3px 1px;
}

.tree > li > ul {
    padding-left: 13px;
}

.tree ul ul {
    margin-left: 15px;
    border-left: 1px dashed #bbb;
}

.tree ul .row {
    gap: 9px;
}

.tree ul ul li {
    height: 12px;
    padding-left: 12px;
    background: linear-gradient(#ccc, #ccc) no-repeat 2px center / 6px 1px;
}

.picked {
    background-color: #dedede;
    outline: 1px solid #dedede;
}

/* view area */
.view {
    flex: 1;
    min-width: 0;
    display: flex;
    flex-direction: column;
    margin-right: 1px;
}

.viewtabs {
    display: flex;
    height: 16px;
    padding: 2px 0 0 1px;
    border-bottom: 1px solid #bbb;
}

.viewtabs a {
    display: flex;
    align-items: center;
    gap: 5px;
    width: 85px;
    padding: 0 3px;
}

.viewtabs .on {
    background-color: #fff;
    color: #111;
}

.viewtabs .x {
    margin-left: auto;
}

.tablist {
    margin-left: auto;
    padding-right: 3px;
}

.canvasrow {
    flex: 1;
    display: flex;
    min-height: 0;
    background-color: #fff;
}

.canvas {
    position: relative;
    flex: 1;
}

.drawing {
    width: 100%;
}

.profile {
    fill: #cb00ee;
    stroke: #a800c8;
    stroke-width: 1;
}

.copy {
    fill: #0a36b9;
}

.seam {
    fill: none;
    stroke: #fbe0ff;
    stroke-width: 3;
}

.seam.white {
    stroke: #fff;
}

.nodes {
    fill: none;
    stroke: #2a52cc;
    stroke-width: 1;
}

.nodes .end {
    fill: #5a7be0;
}

.navbar {
    position: absolute;
    top: 1px;
    right: 0;
    border: 1px solid #b5b5b5;
    border-radius: 4px;
    background-color: #f4f4f4;
}

.vscroll {
    width: 12px;
    display: flex;
    flex-direction: column;
    align-items: center;
    justify-content: space-between;
    padding: 3px 0 2px;
    background-color: #efefef;
}

.grip {
    width: 10px;
    height: 12px;
    background-color: #c8c8c8;
}

.viewbar {
    display: flex;
    align-items: center;
    gap: 2px;
    height: 12px;
    background-color: #efefef;
    border-bottom: 1px solid #fff;
}

.scale {
    width: 38px;
    margin-right: 13px;
    padding-left: 18px;
    white-space: nowrap;
}

.htrack {
    flex: 1;
    display: flex;
    justify-content: center;
}

.htrack .grip {
    height: 10px;
}

/* status bar */
.status {
    display: flex;
    align-items: center;
    justify-content: space-between;
    height: 18px;
    padding: 0 60px 0 3px;
}

.toggles {
    display: flex;
    gap: 5px;
}

/* window behind */
.behind-side {
    width: 14px;
    display: flex;
    flex-direction: column;
    background-color: #dedede;
}

.b-top {
    height: 23px;
    background-color: #d5dcdc;
}

.b-white {
    height: 24px;
    background-color: #fff;
}

.b-dark {
    height: 38px;
    background-color: #2e3133;
}

.b-track {
    flex: 1;
    display: flex;
    flex-direction: column;
    align-items: flex-end;
    padding: 4px 3px 2px 1px;
    background: linear-gradient(to right, #c8c8c8, #ececec);
}

.b-track svg {
    align-self: flex-start;
}

.b-track .grip {
    width: 9px;
    margin: auto 0;
    background-color: #b8b8b8;
}

.behind-bottom {
    display: flex;
    height: 14px;
}

.cell {
    width: 188px;
    background-color: #2e3133;
    color: #fff;
    font-weight: bold;
    line-height: 18px;
    text-align: center;
}

.sheetbar {
    flex: 1;
    display: flex;
    align-items: center;
    gap: 8px;
    padding: 0 14px 0 4px;
    background: linear-gradient(#cfcfcf, #eceef0 60%);
}

.sheetbar svg {
    flex: 1;
    min-width: 0;
    height: 14px;
}

/* taskbar */
.taskbar {
    display: flex;
    height: 27px;
    background-color: #070c12;
    color: #fff;
}

.taskbar > button {
    width: 33px;
}

.taskbar .run {
    border-bottom: 2px solid #76b0dc;
    border-left: 3px solid transparent;
    border-right: 3px solid transparent;
}

.taskbar .current {
    border-left: 0;
    border-right: 0;
    background-color: #3d4247;
}

.app2d {
    width: 14px;
    height: 15px;
    line-height: 15px;
    background-color: #4aa5c4;
    font-weight: bold;
}

.appr {
    display: flex;
    align-items: center;
    justify-content: center;
    width: 16px;
    height: 16px;
    background-color: #dce8f2;
    color: #23609c;
}

.tray {
    flex: 1;
    display: flex;
    align-items: center;
    justify-content: flex-end;
    gap: 4px;
    padding-right: 11px;
}

.tray .gap {
    margin-left: 10px;
}

.clock {
    display: flex;
    flex-direction: column;
    width: 40px;
    margin-left: 1px;
    text-align: center;
}

.note {
    position: relative;
    margin-left: 4px;
}

.note span {
    position: absolute;
    right: 3px;
    bottom: 0;
    font-weight: bold;
}
```
